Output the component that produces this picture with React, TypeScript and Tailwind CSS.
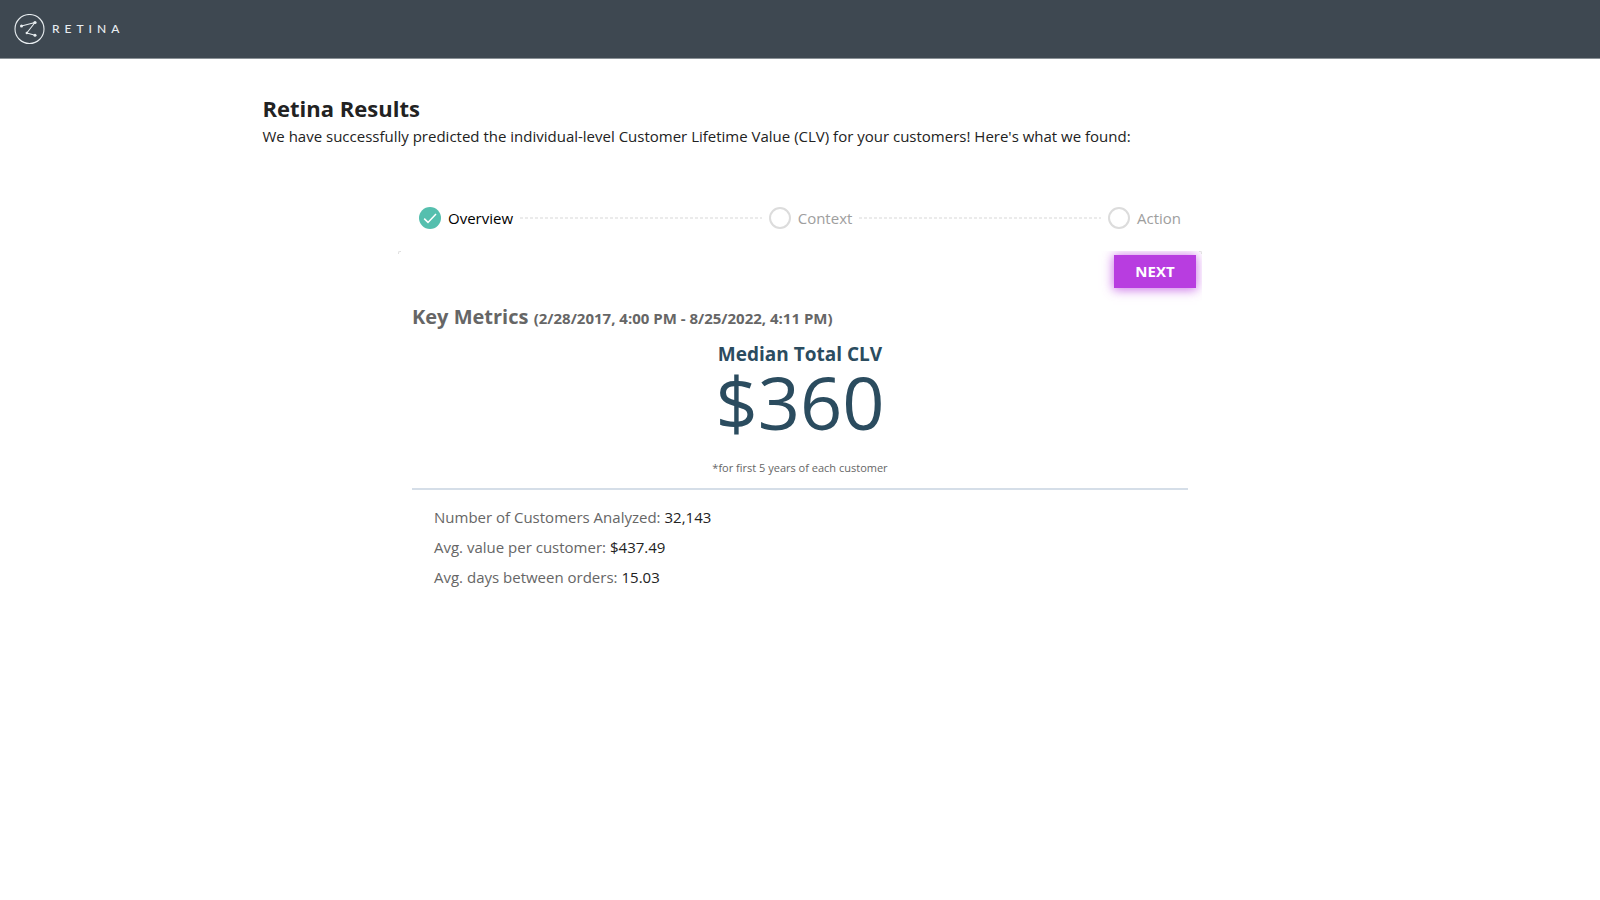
import React from 'react';
import { clsx } from 'clsx';

interface Step {
  label: string;
  done: boolean;
}

interface Metric {
  label: string;
  value: string;
}

const STEPS: Step[] = [
  { label: 'Overview', done: true },
  { label: 'Context', done: false },
  { label: 'Action', done: false }
];

const METRICS: Metric[] = [
  { label: 'Number of Customers Analyzed:', value: '32,143' },
  { label: 'Avg. value per customer:', value: '$437.49' },
  { label: 'Avg. days between orders:', value: '15.03' }
];

const Logo: React.FC = () => (
  <a href="#" className="flex items-center gap-[7px] text-[#e8edf0]">
    <svg className="size-[31px]" viewBox="0 0 31 31" fill="none" stroke="currentColor" aria-hidden="true">
      <circle cx="15.5" cy="15" r="14.5" strokeWidth="1.1" />
      <path d="M7.5 12 21 8.5 12.8 19 21 21.3" strokeWidth="1.1" strokeLinejoin="round" />
      <g fill="currentColor" stroke="none">
        <circle cx="7.5" cy="12" r="1.5" />
        <circle cx="21" cy="8.5" r="1.6" />
        <circle cx="12.8" cy="19" r="1.2" />
        <circle cx="21" cy="21.3" r="1.5" />
      </g>
    </svg>
    <span className="font-['Lato',sans-serif] text-xs leading-4 font-medium tracking-[5px]">RETINA</span>
  </a>
);

const StepMarker: React.FC<{ done: boolean }> = ({ done }) => (
  <span
    className={clsx(
      'flex size-[22px] items-center justify-center rounded-full',
      done ? 'bg-[#55bfae]' : 'border-2 border-[#dcdcdc]'
    )}
  >
    {done && (
      <svg className="size-4" viewBox="0 0 16 16" fill="none" stroke="white" strokeWidth="1.5" aria-hidden="true">
        <path d="M2.2 8.6 6 12.4 14 4" />
      </svg>
    )}
  </span>
);

const Stepper: React.FC = () => (
  <ol className="flex items-center px-[21px]">
    {STEPS.map((step, index) => (
      <React.Fragment key={step.label}>
        {index > 0 && (
          <li
            aria-hidden="true"
            className="mx-[7px] h-[2px] flex-1 bg-[repeating-linear-gradient(90deg,#ebebeb_0_3px,transparent_3px_5px)]"
          />
        )}
        <li className={clsx('flex items-center gap-[7px] text-[15px] leading-6', step.done ? 'text-black' : 'text-[#9e9e9e]')}>
          <StepMarker done={step.done} />
          {step.label}
        </li>
      </React.Fragment>
    ))}
  </ol>
);

const KeyMetrics: React.FC = () => (
  <section className="px-[14px] text-[#666666]">
    <h2 className="text-xl leading-7 font-bold">
      Key Metrics <span className="text-[15px]">(2/28/2017, 4:00 PM - 8/25/2022, 4:11 PM)</span>
    </h2>

    <div className="mt-2 border-b-2 border-[#d5dee8] pb-3 text-center">
      <h3 className="text-[19px] leading-7 font-bold text-[#2b4c5f]">Median Total CLV</h3>
      <p className="text-[74px] leading-[68px] text-[#2b4c5f]">$360</p>
      <p className="mt-6 text-[11px] leading-4">*for first 5 years of each customer</p>
    </div>

    <dl className="mt-3 px-[22px] text-[15px] leading-[30px]">
      {METRICS.map((metric) => (
        <div key={metric.label} className="flex gap-1">
          <dt>{metric.label}</dt>
          <dd className="text-[#222222]">{metric.value}</dd>
        </div>
      ))}
    </dl>
  </section>
);

export default function App() {
  return (
    <div className="min-h-screen bg-white font-['Open_Sans',sans-serif] text-[#222222]">
      <header className="flex h-[59px] items-center border-b border-[#8a9196] bg-[#3e4851] px-[14px]">
        <Logo />
      </header>

      <main className="mx-auto max-w-[1075px] pt-[34px]">
        <h1 className="text-[22px] leading-[30px] font-bold">Retina Results</h1>
        <p className="mt-px text-[15px] leading-6">
          We have successfully predicted the individual-level Customer Lifetime Value (CLV) for your customers! Here's what
          we found:
        </p>

        <div className="mx-auto mt-[58px] max-w-[804px]">
          <Stepper />
          <div className="relative mt-[21px] overflow-hidden">
            {/* Only the corners of the panel outline are visible */}
            <span className="absolute top-0 left-0 size-[3px] rounded-tl-[2px] border-t border-l border-[#e0e0e0]" />
            <span className="absolute top-0 right-0 size-[3px] rounded-tr-[2px] border-t border-r border-[#e0e0e0]" />
            <div className="flex justify-end px-[6px] pt-1">
              <button
                type="button"
                className="h-[33px] w-[82px] bg-[#b83de0] text-[15px] font-bold text-white shadow-[0_1px_10px_1px_rgba(184,61,224,0.7)]"
              >
                NEXT
              </button>
            </div>
            <div className="mt-[15px]">
              <KeyMetrics />
            </div>
          </div>
        </div>
      </main>
    </div>
  );
}
